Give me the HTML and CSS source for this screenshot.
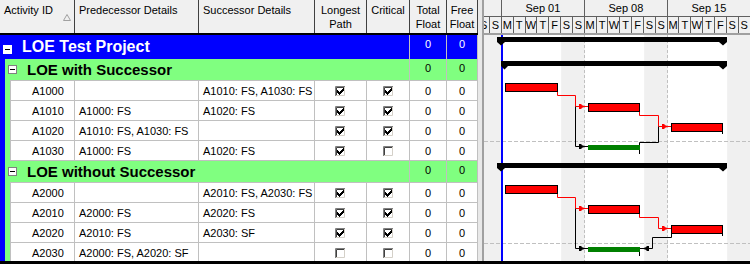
FILE: index.html
```html
<!DOCTYPE html>
<html lang="en">
<head>
    <meta charset="UTF-8">
    <title>LOE Test Project - Activities</title>
    <link rel="stylesheet" href="styles.css">
</head>
<body>
    <!-- shared glyphs: classic checkboxes and relationship arrow -->
    <svg class="defs" width="0" height="0">
        <symbol id="cb-off" viewBox="0 0 11 11">
            <rect x="1" y="1" width="9" height="9" fill="#fff"/>
            <path d="M0.5 10V0.5H10" stroke="#808080" fill="none"/>
            <path d="M1.5 9V1.5H9" stroke="#404040" fill="none"/>
            <path d="M1 9.5H9.5V1" stroke="#d4d0c8" fill="none"/>
        </symbol>
        <symbol id="cb-on" viewBox="0 0 11 11">
            <use href="#cb-off"/>
            <path d="M2 4H3V5H4V6H5V5H6V4H7V3H8V2H9V5H8V6H7V7H6V8H5V9H4V8H3V7H2Z" fill="#000"/>
        </symbol>
        <path id="arrow" d="M-9 -2.5H-6.5V-1.5L-2 0L-6.5 1.5V2.5H-9Z"/>
    </svg>

    <div class="frame">
        <div class="grid">
            <div class="grid-head">
                <div class="hcell c-id hcell-id">
                    <span>Activity ID</span>
                    <svg class="sort" width="8" height="7" viewBox="0 0 8 7"><path d="M0.5 6.5L4 0.5L7.5 6.5Z" fill="none" stroke="#a0a0a0"/></svg>
                </div>
                <div class="hcell c-pred">Predecessor Details</div>
                <div class="hcell c-succ">Successor Details</div>
                <div class="hcell c-lp mid">Longest<br>Path</div>
                <div class="hcell c-crit mid">Critical</div>
                <div class="hcell c-tf mid">Total<br>Float</div>
                <div class="hcell c-ff mid">Free<br>Float</div>
            </div>

            <div class="project">
                <div class="band band-project">
                    <div class="band-title"><span class="toggle toggle-project"></span>LOE Test Project</div>
                    <div class="band-num c-tf">0</div>
                    <div class="band-num c-ff">0</div>
                </div>
                <div class="project-body">
                    <div class="wbs">
                        <div class="band band-wbs">
                            <div class="band-title"><span class="toggle"></span>LOE with Successor</div>
                            <div class="band-num c-tf">0</div>
                            <div class="band-num c-ff">0</div>
                        </div>
                        <div class="acts">
                            <div class="act">
                                <div class="cell c-id">A1000</div>
                                <div class="cell c-pred"></div>
                                <div class="cell c-succ">A1010: FS, A1030: FS</div>
                                <div class="cell c-lp mid"><svg class="cb"><use href="#cb-on"/></svg></div>
                                <div class="cell c-crit mid"><svg class="cb"><use href="#cb-on"/></svg></div>
                                <div class="cell c-tf mid">0</div>
                                <div class="cell c-ff mid">0</div>
                            </div>
                            <div class="act">
                                <div class="cell c-id">A1010</div>
                                <div class="cell c-pred">A1000: FS</div>
                                <div class="cell c-succ">A1020: FS</div>
                                <div class="cell c-lp mid"><svg class="cb"><use href="#cb-on"/></svg></div>
                                <div class="cell c-crit mid"><svg class="cb"><use href="#cb-on"/></svg></div>
                                <div class="cell c-tf mid">0</div>
                                <div class="cell c-ff mid">0</div>
                            </div>
                            <div class="act">
                                <div class="cell c-id">A1020</div>
                                <div class="cell c-pred">A1010: FS, A1030: FS</div>
                                <div class="cell c-succ"></div>
                                <div class="cell c-lp mid"><svg class="cb"><use href="#cb-on"/></svg></div>
                                <div class="cell c-crit mid"><svg class="cb"><use href="#cb-on"/></svg></div>
                                <div class="cell c-tf mid">0</div>
                                <div class="cell c-ff mid">0</div>
                            </div>
                            <div class="act">
                                <div class="cell c-id">A1030</div>
                                <div class="cell c-pred">A1000: FS</div>
                                <div class="cell c-succ">A1020: FS</div>
                                <div class="cell c-lp mid"><svg class="cb"><use href="#cb-on"/></svg></div>
                                <div class="cell c-crit mid"><svg class="cb"><use href="#cb-off"/></svg></div>
                                <div class="cell c-tf mid">0</div>
                                <div class="cell c-ff mid">0</div>
                            </div>
                        </div>
                    </div>

                    <div class="wbs">
                        <div class="band band-wbs">
                            <div class="band-title"><span class="toggle"></span>LOE without Successor</div>
                            <div class="band-num c-tf">0</div>
                            <div class="band-num c-ff">0</div>
                        </div>
                        <div class="acts">
                            <div class="act">
                                <div class="cell c-id">A2000</div>
                                <div class="cell c-pred"></div>
                                <div class="cell c-succ">A2010: FS, A2030: FS</div>
                                <div class="cell c-lp mid"><svg class="cb"><use href="#cb-on"/></svg></div>
                                <div class="cell c-crit mid"><svg class="cb"><use href="#cb-on"/></svg></div>
                                <div class="cell c-tf mid">0</div>
                                <div class="cell c-ff mid">0</div>
                            </div>
                            <div class="act">
                                <div class="cell c-id">A2010</div>
                                <div class="cell c-pred">A2000: FS</div>
                                <div class="cell c-succ">A2020: FS</div>
                                <div class="cell c-lp mid"><svg class="cb"><use href="#cb-on"/></svg></div>
                                <div class="cell c-crit mid"><svg class="cb"><use href="#cb-on"/></svg></div>
                                <div class="cell c-tf mid">0</div>
                                <div class="cell c-ff mid">0</div>
                            </div>
                            <div class="act">
                                <div class="cell c-id">A2020</div>
                                <div class="cell c-pred">A2010: FS</div>
                                <div class="cell c-succ">A2030: SF</div>
                                <div class="cell c-lp mid"><svg class="cb"><use href="#cb-on"/></svg></div>
                                <div class="cell c-crit mid"><svg class="cb"><use href="#cb-on"/></svg></div>
                                <div class="cell c-tf mid">0</div>
                                <div class="cell c-ff mid">0</div>
                            </div>
                            <div class="act">
                                <div class="cell c-id">A2030</div>
                                <div class="cell c-pred">A2000: FS, A2020: SF</div>
                                <div class="cell c-succ"></div>
                                <div class="cell c-lp mid"><svg class="cb"><use href="#cb-off"/></svg></div>
                                <div class="cell c-crit mid"><svg class="cb"><use href="#cb-off"/></svg></div>
                                <div class="cell c-tf mid">0</div>
                                <div class="cell c-ff mid">0</div>
                            </div>
                        </div>
                    </div>
                </div>
            </div>
        </div>

        <div class="splitter"></div>

        <div class="gantt">
            <div class="scale">
                <div class="weeks">
                    <div class="week lead"></div>
                    <div class="week">Sep 01</div>
                    <div class="week">Sep 08</div>
                    <div class="week">Sep 15</div>
                </div>
                <div class="days">
                    <div class="day">S</div><div class="day">S</div>
                    <div class="day">M</div><div class="day">T</div><div class="day">W</div><div class="day">T</div><div class="day">F</div><div class="day">S</div><div class="day">S</div>
                    <div class="day">M</div><div class="day">T</div><div class="day">W</div><div class="day">T</div><div class="day">F</div><div class="day">S</div><div class="day">S</div>
                    <div class="day">M</div><div class="day">T</div><div class="day">W</div><div class="day">T</div><div class="day">F</div><div class="day">S</div><div class="day">S</div>
                </div>
            </div>

            <!-- chart drawn in page coordinates -->
            <svg class="chart" width="266" height="229" viewBox="484 35 266 229">
                <g fill="#f0f0f0">
                    <rect x="484" y="35" width="17.86" height="229"/>
                    <rect x="561.14" y="35" width="23.72" height="229"/>
                    <rect x="644.14" y="35" width="23.72" height="229"/>
                    <rect x="727.14" y="35" width="23.72" height="229"/>
                </g>
                <g stroke="#c0c0c0" fill="none">
                    <path d="M584.5 35V264M667.5 35V264" stroke-dasharray="3 2"/>
                    <path d="M484 141.5H750M484 243.5H750" stroke-dasharray="4 2"/>
                </g>
                <rect x="501" y="35" width="2" height="229" fill="#0000ff"/>

                <g fill="#000">
                    <path d="M497 37H727V42H497Z M497 42H505L501 45.5Z M719 42H727L723 45.5Z"/>
                    <path d="M501 61H727V66H501Z M501 66H508L504.5 69.5Z M719 66H727L723 69.5Z"/>
                    <path d="M497 163H727V168H497Z M497 168H505L501 171.5Z M719 168H727L723 171.5Z"/>
                </g>

                <path d="M557.5 92V95.5H575.5V106.5H588 M639.5 112V115.5H658.5V126.5H671 M557.5 194V197.5H575.5V208.5H588 M639.5 214V217.5H658.5V228.5H671" stroke="#ff0000" fill="none"/>
                <path d="M575.5 106.5V146.5H588 M639.5 145V142.5H658.5V126.5 M575.5 208.5V248.5H588 M671.5 234V237.5H652.5V248.5H640" stroke="#000" fill="none"/>

                <g fill="#ff0000" stroke="#000">
                    <rect x="505.5" y="83.5" width="52" height="8"/>
                    <rect x="588.5" y="103.5" width="51" height="8"/>
                    <rect x="671.5" y="123.5" width="51" height="8"/>
                    <rect x="505.5" y="185.5" width="52" height="8"/>
                    <rect x="588.5" y="205.5" width="51" height="8"/>
                    <rect x="671.5" y="225.5" width="51" height="8"/>
                </g>
                <g fill="#008000">
                    <rect x="588" y="145" width="52" height="5"/>
                    <rect x="588" y="247" width="52" height="5"/>
                </g>
                <path d="M639.5 150V154M722.5 132V134M639.5 252V256M722.5 234V236" stroke="#000"/>

                <g fill="#ff0000">
                    <use href="#arrow" x="588" y="106.5"/>
                    <use href="#arrow" x="671" y="126.5"/>
                    <use href="#arrow" x="588" y="208.5"/>
                    <use href="#arrow" x="671" y="228.5"/>
                </g>
                <g fill="#000">
                    <use href="#arrow" x="588" y="146.5"/>
                    <use href="#arrow" x="588" y="248.5"/>
                    <use href="#arrow" transform="translate(640 248.5) scale(-1 1)"/>
                </g>
            </svg>
        </div>
    </div>
</body>
</html>
```

FILE: styles.css
```css
body {
    margin: 0;
    font-family: "Liberation Sans", Arial, sans-serif;
    font-size: 11px;
    color: #000;
    background: #fff;
}
.defs {
    position: absolute;
}
.frame {
    display: flex;
    width: 750px;
    height: 261px;
    overflow: hidden;
    border-bottom: 3px solid #000;
}

/* left table */
.grid {
    width: 478px;
    flex: none;
}
.grid-head {
    display: flex;
    height: 33px;
    background-color: #f0f0f0;
    border-bottom: 2px solid #000;
}
.hcell {
    box-sizing: border-box;
    border-right: 1px solid #404040;
    padding: 3px 0 0 4px;
    line-height: 14px;
    white-space: nowrap;
}
.hcell.mid {
    text-align: center;
    padding-left: 0;
}
.hcell-id {
    display: flex;
    flex-direction: column;
}
.sort {
    align-self: flex-end;
    margin: -3px 3px 0 0;
}
.c-id { width: 75px; }
.c-pred { width: 124px; }
.c-succ { width: 116px; }
.c-lp { width: 52px; }
.c-crit { width: 43px; }
.c-tf { width: 37px; flex: none; }
.c-ff { width: 31px; flex: none; }

.project {
    background-color: #0000ff;
}
.project-body {
    padding-left: 5px;
}
.wbs {
    background-color: #80ff80;
}
.band {
    display: flex;
}
.band-project {
    height: 24px;
    color: #fff;
}
.band-wbs {
    height: 21px;
}
.band-title {
    flex: 1;
    display: flex;
    align-items: center;
    font-weight: bold;
    white-space: nowrap;
    border-right: 1px solid #c0c0c0;
}
.band-project .band-title {
    font-size: 16px;
}
.band-wbs .band-title {
    font-size: 15px;
}
.band-num {
    box-sizing: border-box;
    border-right: 1px solid #c0c0c0;
    text-align: center;
    padding-top: 2px;
    line-height: 14px;
}
.toggle {
    box-sizing: border-box;
    width: 9px;
    height: 9px;
    margin: 0 10px 0 3px;
    border: 1px solid #808080;
    background-color: #fff;
    display: flex;
    align-items: center;
    justify-content: center;
    flex: none;
}
.toggle::after {
    content: "";
    width: 5px;
    height: 1px;
    background-color: #000;
}
.toggle-project {
    margin-top: 5px;
    border-color: #fff;
}

.acts {
    margin-left: 5px;
    border-top: 1px solid #c0c0c0;
}
.act {
    display: flex;
    height: 20px;
    background-color: #fff;
}
.cell {
    box-sizing: border-box;
    display: flex;
    align-items: center;
    padding-left: 4px;
    border-right: 1px solid #c0c0c0;
    border-bottom: 1px solid #c0c0c0;
    white-space: nowrap;
    overflow: hidden;
}
.act .c-id {
    width: 65px;
    padding-left: 21px;
    border-left: 1px solid #c0c0c0;
}
.cell.mid {
    justify-content: center;
    padding-left: 0;
}
.cb {
    display: block;
    width: 11px;
    height: 11px;
    margin-top: 2px;
}

.splitter {
    width: 4px;
    flex: none;
    background-color: #e8e8e8;
    border-right: 2px solid #a0a0a0;
}

/* gantt */
.gantt {
    flex: 1;
    overflow: hidden;
}
.scale {
    height: 33px;
    background-color: #f0f0f0;
    border-bottom: 2px solid #a0a0a0;
    overflow: hidden;
}
.weeks {
    display: flex;
    box-sizing: border-box;
    height: 17px;
    border-bottom: 1px solid #606060;
}
.week {
    flex: none;
    box-sizing: border-box;
    width: 83px;
    border-right: 1px solid #606060;
    text-align: center;
    line-height: 16px;
}
.week.lead {
    width: 17.86px;
}
.days {
    display: flex;
    height: 16px;
    margin-left: -5.86px;
}
.day {
    flex: none;
    box-sizing: border-box;
    width: 11.857px;
    border-right: 1px solid #606060;
    text-align: center;
    line-height: 16px;
}
.chart {
    display: block;
}
```
